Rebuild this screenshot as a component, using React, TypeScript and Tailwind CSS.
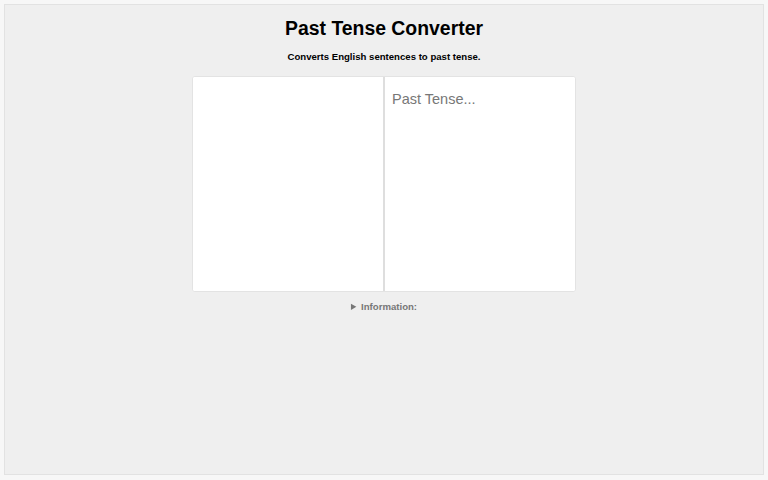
import React from "react";

export default function App() {
  return (
    <div
      className="w-[768px] h-[480px] bg-[#f7f7f7] p-[4px] pb-[5px] pr-[4px]"
      style={{ fontFamily: '"Liberation Sans", Arial, sans-serif' }}
    >
      <div className="h-full border border-[#e2e2e2] bg-[#efefef] flex flex-col items-center">
        <h1 className="mt-[11px] text-[19.4px] leading-[24px] font-bold text-black">
          Past Tense Converter
        </h1>
        <p className="mt-[11px] text-[9.6px] leading-[12px] font-bold text-black">
          Converts English sentences to past tense.
        </p>
        <div className="mt-[13px] w-[384px] h-[216px] flex border border-[#e3e3e3] rounded-[3px] bg-white overflow-hidden">
          <textarea
            className="w-[192px] h-full resize-none outline-none p-[7px] text-[14.5px] border-r-2 border-[#dedede] bg-white"
            style={{ fontFamily: '"Liberation Sans", Arial, sans-serif' }}
          />
          <textarea
            placeholder="Past Tense..."
            className="flex-1 h-full resize-none outline-none px-[7px] py-[13px] text-[14.5px] leading-[18px] bg-white placeholder:text-[#777]"
            style={{ fontFamily: '"Liberation Sans", Arial, sans-serif' }}
          />
        </div>
        <details className="mt-[9px] text-[9.6px] leading-[12px] font-bold text-[#777]">
          <summary className="cursor-pointer">Information:</summary>
        </details>
      </div>
    </div>
  );
}
